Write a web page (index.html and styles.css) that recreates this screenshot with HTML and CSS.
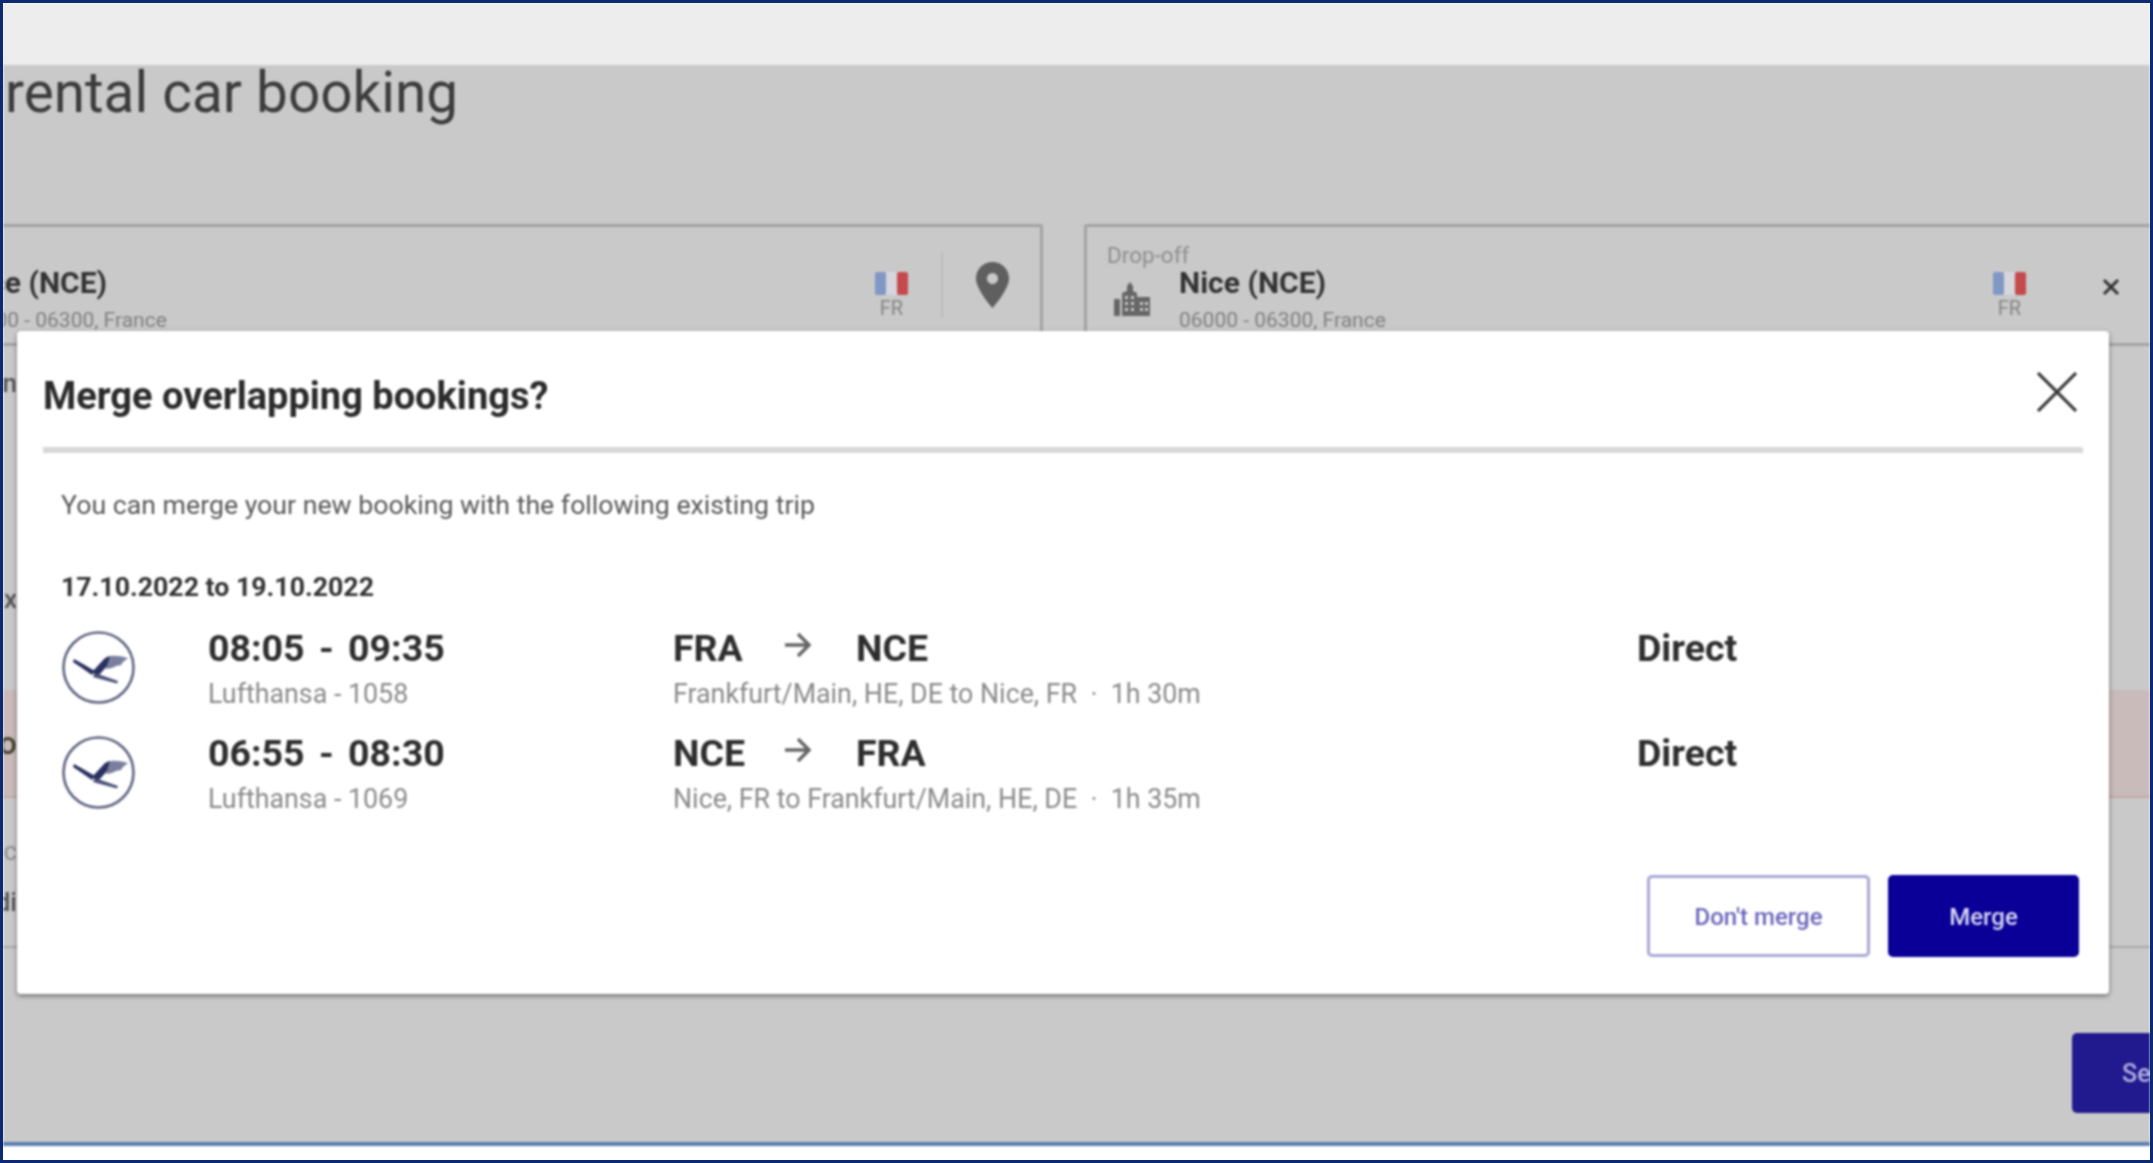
FILE: index.html
```html
<!DOCTYPE html>
<html lang="en">
<head>
<meta charset="utf-8">
<title>Merge overlapping bookings</title>
<link rel="stylesheet" href="styles.css">
</head>
<body>
<svg class="defs" width="0" height="0" aria-hidden="true">
  <symbol id="crane" viewBox="0 0 73 73">
    <circle cx="36.5" cy="36.5" r="35" fill="none" stroke="#5f6480" stroke-width="2.6"/>
    <path d="M12 28 L21 33 L33 40 L30 44 L17 35 L11 31 Z" fill="#2a3160"/>
    <path d="M31 40 L42 28 Q45 25 50 25 L47 33 L37 44 L33 46 Z" fill="#2a3160"/>
    <path d="M48 25 Q56 24 66 27 L61 31 L59 34 L54 35 L50 37 L44 38 Z" fill="#7a7f9e"/>
    <path d="M33 42 L56 50 L55 52.500 L31 46 Z" fill="#4a5078"/>
  </symbol>
  <symbol id="arrow" viewBox="0 0 28 28">
    <path d="M2 14 H25 M15 3 L26 14 L15 25" fill="none" stroke="#666" stroke-width="3.4"/>
  </symbol>
  <symbol id="flag" viewBox="0 0 33 23">
    <rect width="11" height="23" rx="2" fill="#8198c4"/>
    <rect x="11" width="11" height="23" fill="#d6d6dc"/>
    <rect x="22" width="11" height="23" rx="2" fill="#c44a4e"/>
  </symbol>
</svg>
<div class="frame">
  <div class="backdrop">
    <div class="topbar"></div>
    <main class="page">
      <h1 class="page-title">rental car booking</h1>
      <div class="fields">
        <section class="place place-pickup">
          <div class="place-main">
            <span class="place-label">Pick-up</span>
            <span class="place-name">Nice (NCE)</span>
            <span class="place-sub">06000 - 06300, France</span>
          </div>
          <div class="flag-block">
            <svg class="flag"><use href="#flag"/></svg>
            <span class="flag-code">FR</span>
          </div>
          <span class="vrule"></span>
          <svg class="pin" viewBox="0 0 33 46"><path fill-rule="evenodd" fill="#5f5f5f" d="M16.5 0C7.4 0 0 7.3 0 16.4 0 27.5 16.5 46 16.5 46S33 27.5 33 16.4C33 7.3 25.600 0 16.500 0ZM16.500 11A5.500 5.500 0 1 1 16.500 22 5.500 5.500 0 0 1 16.500 11Z"/></svg>
        </section>
        <section class="place place-dropoff">
          <div class="place-main">
            <span class="place-label">Drop-off</span>
            <svg class="city" viewBox="0 0 36 34"><path fill="#666" d="M8 34V11L13 9V4L16 0 19 4V9L23 11V15H36V34ZM11 14V17H14V14ZM17 14V17H20V14ZM11 20V23H14V20ZM17 20V23H20V20ZM26 20V23H29V20ZM31 20V23H34V20ZM11 26V29H14V26ZM17 26V29H20V26ZM26 26V29H29V26ZM31 26V29H34V26Z"/><path fill="#666" d="M0 17H6V34H0Z"/></svg>
            <span class="place-name">Nice (NCE)</span>
            <span class="place-sub">06000 - 06300, France</span>
          </div>
          <div class="flag-block">
            <svg class="flag"><use href="#flag"/></svg>
            <span class="flag-code">FR</span>
          </div>
          <svg class="clear" viewBox="0 0 18 18"><path d="M2 2 L16 16 M16 2 L2 16" stroke="#333" stroke-width="3"/></svg>
        </section>
      </div>
      <div class="clip-row clip-row-a"><span class="clip"><span>Return</span></span></div>
      <div class="clip-row clip-row-b"><span class="clip"><span>Box</span></span></div>
      <div class="clip-row clip-row-alert"><span class="clip"><span>No</span></span></div>
      <div class="clip-row clip-row-c">
        <span class="clip clip-faint"><span>Rec</span></span>
        <span class="clip"><span>Adi</span></span>
      </div>
      <button class="search">Search</button>
    </main>
    <div class="foot"></div>
  </div>
  <section class="modal" role="dialog" aria-labelledby="modal-title">
    <header class="modal-head">
      <h2 class="modal-title" id="modal-title">Merge overlapping bookings?</h2>
      <svg class="modal-close" viewBox="0 0 40 40"><path d="M1 1 L39 39 M39 1 L1 39" stroke="#3a3a3a" stroke-width="3.2"/></svg>
    </header>
    <div class="modal-body">
      <p class="lead">You can merge your new booking with the following existing trip</p>
      <p class="dates">17.10.2022 to 19.10.2022</p>
      <div class="flights">
        <svg class="carrier"><use href="#crane"/></svg>
        <div>
          <div class="main-line times">08:05 - 09:35</div>
          <div class="sub-line">Lufthansa - 1058</div>
        </div>
        <div>
          <div class="main-line route"><span class="iata">FRA</span><svg class="arrow"><use href="#arrow"/></svg><span class="iata">NCE</span></div>
          <div class="sub-line">Frankfurt/Main, HE, DE to Nice, FR &nbsp;·&nbsp; 1h 30m</div>
        </div>
        <div class="main-line">Direct</div>

        <svg class="carrier"><use href="#crane"/></svg>
        <div>
          <div class="main-line times">06:55 - 08:30</div>
          <div class="sub-line">Lufthansa - 1069</div>
        </div>
        <div>
          <div class="main-line route"><span class="iata">NCE</span><svg class="arrow"><use href="#arrow"/></svg><span class="iata">FRA</span></div>
          <div class="sub-line">Nice, FR to Frankfurt/Main, HE, DE &nbsp;·&nbsp; 1h 35m</div>
        </div>
        <div class="main-line">Direct</div>
      </div>
    </div>
    <footer class="modal-actions">
      <button class="btn btn-ghost">Don't merge</button>
      <button class="btn btn-solid">Merge</button>
    </footer>
  </section>
</div>
</body>
</html>
```
FILE: styles.css
```css
* { box-sizing: border-box; }
html, body { margin: 0; padding: 0; }
body { font-family: Roboto, "Liberation Sans", sans-serif; background: #fff; width: 2153px; height: 1163px; overflow: hidden; }
.defs { position: absolute; }

.frame {
  position: relative;
  width: 2153px;
  height: 1163px;
  border: 3px solid #0b2a72;
  overflow: hidden;
}
.backdrop {
  display: flex;
  flex-direction: column;
  height: 100%;
  background: #c9c9c9;
  filter: blur(0.9px);
}
.topbar { height: 62px; flex: none; background: #ededed; }
.page { flex: 1; min-height: 0; color: #333; overflow: hidden; }
.foot { height: 18px; flex: none; background: #fff; border-top: 4px solid #5b80b4; }

.page-title {
  margin: 0 0 103px;
  padding-left: 2px;
  font-size: 56.7px;
  line-height: 56px;
  font-weight: 400;
  color: #3c3c3c;
  white-space: nowrap;
}

.fields { display: flex; gap: 41px; margin-left: -137px; }
.place {
  flex: none;
  display: flex;
  align-items: flex-start;
  height: 122px;
  border: 3px solid #a3a3a3;
  border-radius: 3px;
  padding: 16px 0 0 19px;
  overflow: hidden;
}
.place-pickup { width: 1177px; padding-right: 31px; }
.place-dropoff { width: 1086px; padding: 16px 47px 0 20px; }
.place-main {
  flex: 1;
  display: grid;
  grid-template-columns: 72px 1fr;
  grid-template-rows: 24px 34px 24px;
  row-gap: 0;
}
.place-label { grid-column: 1 / 3; font-size: 22.5px; line-height: 24px; color: #8e8e8e; }
.place-name { grid-column: 2; grid-row: 2; font-size: 30px; line-height: 32px; font-weight: 700; color: #333; }
.place-sub { grid-column: 2; grid-row: 3; font-size: 21px; line-height: 24px; margin-top: 7px; color: #808080; white-space: nowrap; }
.city { grid-column: 1; grid-row: 2 / 4; width: 36px; height: 34px; margin: 15px 0 0 7px; }
.flag-block { flex: none; display: flex; flex-direction: column; align-items: center; width: 33px; margin-top: 29px; }
.flag { width: 33px; height: 23px; display: block; }
.flag-code { font-size: 20px; line-height: 20px; margin-top: 3px; color: #858585; }
.vrule { flex: none; width: 2px; height: 65px; margin: 10px 33px 0 33px; background: #bcbcbc; }
.pin { flex: none; width: 33px; height: 46px; margin-top: 19px; }
.clear { flex: none; width: 18px; height: 18px; margin: 35px 0 0 76px; }

.clip-row { display: flex; }
.clip { display: flex; justify-content: flex-end; width: 14px; overflow: hidden; font-size: 26px; line-height: 34px; font-weight: 500; color: #555; }
.clip span { flex: none; }
.clip-row-a { height: 74px; align-items: center; }
.clip-row-b { height: 270px; padding-top: 162px; align-items: flex-start; }
.clip-row-alert { height: 108px; align-items: center; background: #c9bbb9; border-bottom: 2px solid #c2a8a4; }
.clip-row-alert .clip { color: #443; font-size: 32px; }
.clip-row-c { height: 150px; flex-direction: column; padding-top: 36px; gap: 17px; border-bottom: 2px solid #a8a8a8; }
.clip-faint { color: #8e8e8e; font-weight: 400; }

.search {
  display: block;
  width: 130px;
  height: 80px;
  margin: 85px 0 0 2069px;
  padding: 0 0 0 50px;
  border: 0;
  border-radius: 5px;
  background: #201a8e;
  color: #b3b0e0;
  font: 500 25px Roboto, sans-serif;
  text-align: left;
  white-space: nowrap;
}

.modal {
  position: absolute;
  left: 14px;
  top: 328px;
  width: 2092px;
  background: #fff;
  border-radius: 4px;
  box-shadow: 0 2px 5px rgba(0, 0, 0, .45);
  color: #333;
  filter: blur(0.8px);
}
.modal-head {
  display: flex;
  justify-content: space-between;
  align-items: flex-start;
  height: 122px;
  margin: 0 26px;
  padding: 43px 6px 0 0;
  border-bottom: 6px solid #d8d8d8;
}
.modal-title { margin: 0; font-size: 38px; line-height: 44px; font-weight: 700; color: #2b2b2b; }
.modal-close { width: 40px; height: 40px; margin-top: -2px; }

.modal-body { padding: 34px 0 0 44px; }
.lead { margin: 0; font-size: 26.7px; line-height: 36px; color: #585858; }
.dates { margin: 48px 0 25px; font-size: 26.700px; line-height: 32px; font-weight: 700; color: #333; }

.flights {
  display: grid;
  grid-template-columns: 147px 465px 964px auto;
  grid-auto-rows: 80px;
  row-gap: 25px;
}
.carrier { width: 73px; height: 73px; margin: 3px 0 0 1px; }
.main-line { font-size: 37.500px; line-height: 40px; font-weight: 700; color: #2e2e2e; white-space: nowrap; }
.times { word-spacing: 5px; }
.sub-line { margin-top: 11px; font-size: 26.800px; line-height: 30px; color: #8a8a8a; white-space: nowrap; }
.route { display: flex; align-items: center; }
.iata { width: 72px; }
.arrow { width: 28px; height: 28px; margin: -6px 45px 0 38px; }

.modal-actions { display: flex; justify-content: flex-end; gap: 18px; padding: 62px 30px 37px 0; }
.btn { height: 82px; padding-top: 3px; border-radius: 5px; font: 500 24px Roboto, sans-serif; }
.btn-ghost { width: 223px; background: #fff; border: 3px solid #aba8d6; color: #6c66bc; }
.btn-solid { width: 191px; background: #0a0098; border: 0; color: #d9d8f2; }
```
